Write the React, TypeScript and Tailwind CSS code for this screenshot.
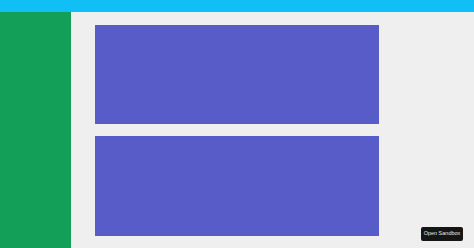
export default function App() {
  return (
    <div className="relative flex h-[248px] w-[474px] flex-col overflow-hidden bg-[#efefef]" style={{ fontFamily: '"Liberation Sans", Arial, sans-serif' }}>
      <div className="h-[12px] shrink-0 bg-[#10bff5]" />
      <div className="flex min-h-0 flex-1">
        <div className="w-[71px] shrink-0 bg-[#139f57]" />
        <div className="flex flex-1 flex-col gap-[12px] pl-[24px] pt-[13px]">
          <div className="h-[99px] w-[284px] bg-[#585cc9]" />
          <div className="h-[100px] w-[284px] bg-[#585cc9]" />
        </div>
      </div>
      <div className="absolute bottom-[7px] right-[11px] flex h-[14px] w-[42px] items-center justify-center rounded-[2px] bg-[#151515] text-[5.5px] leading-none text-[#e8e8e8]">
        Open Sandbox
      </div>
    </div>
  );
}
